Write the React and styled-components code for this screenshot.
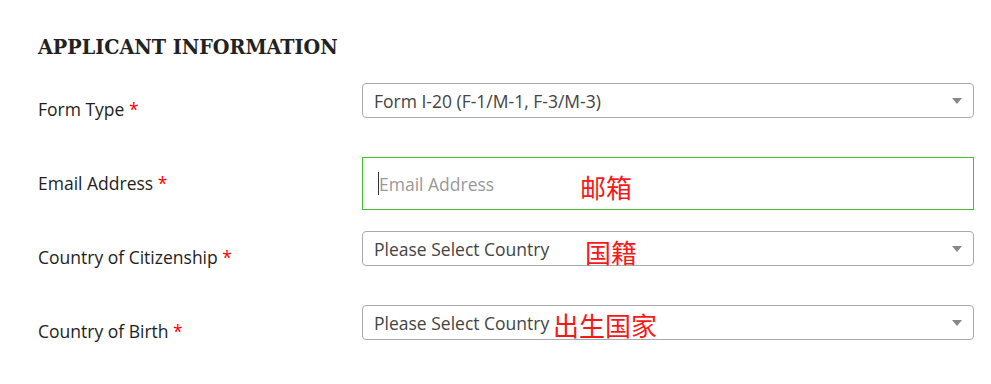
import React from "react";
import styled, { createGlobalStyle } from "styled-components";

const GlobalStyle = createGlobalStyle`
  html, body {
    margin: 0;
    padding: 0;
    background: #fff;
  }
  body {
    font-family: "Open Sans", "Noto Sans", sans-serif;
    color: #222;
  }
`;

const Section = styled.section`
  width: 991px;
  height: 384px;
  box-sizing: border-box;
  padding: 33px 17px 0 38px;
  background: #fff;
`;

const Heading = styled.h2`
  margin: 0 0 22px;
  font-family: "DejaVu Serif Condensed", "DejaVu Serif", serif;
  font-weight: 700;
  font-size: 21.3px;
  line-height: 28px;
  letter-spacing: 0;
  color: #222;
`;

const Fields = styled.div`
  display: flex;
  flex-direction: column;
  gap: 21px;
`;

const Row = styled.div`
  display: grid;
  grid-template-columns: 324px 1fr;
  height: 53px;
`;

const Label = styled.label`
  align-self: center;
  margin-bottom: 2px;
  font-size: 17.5px;
  line-height: 24px;
  color: #1e1e1e;
`;

const Required = styled.span`
  color: #f00;
`;

const Control = styled.div`
  position: relative;
  align-self: start;
`;

const Select = styled.div`
  box-sizing: border-box;
  height: 35px;
  border: 1px solid #aaa;
  border-radius: 4px;
  padding: 0 11px;
  display: flex;
  align-items: center;
  justify-content: space-between;
  font-size: 17.5px;
  color: #444;
`;

const Arrow = styled.span`
  width: 0;
  height: 0;
  border-left: 5px solid transparent;
  border-right: 5px solid transparent;
  border-top: 6px solid #888;
`;

const Input = styled.div`
  box-sizing: border-box;
  height: 53px;
  border: 1px solid #46c02c;
  padding: 0 15px;
  display: flex;
  align-items: center;
  font-size: 17.5px;
  color: #999;
`;

const Caret = styled.span`
  width: 1px;
  height: 23px;
  background: #333;
`;

const Note = styled.span`
  position: absolute;
  left: ${(p) => p.$left}px;
  top: ${(p) => p.$top}px;
  font-family: "Noto Sans CJK SC", sans-serif;
  font-size: 26px;
  line-height: 30px;
  color: #f81818;
  pointer-events: none;
`;

const Field = ({ label, children }) => (
  <Row>
    <Label>
      {label} <Required>*</Required>
    </Label>
    <Control>{children}</Control>
  </Row>
);

export default function App() {
  return (
    <>
      <GlobalStyle />
      <Section>
        <Heading>APPLICANT INFORMATION</Heading>
        <Fields>
          <Field label="Form Type">
            <Select>
              Form I-20 (F-1/M-1, F-3/M-3)
              <Arrow />
            </Select>
          </Field>
          <Field label="Email Address">
            <Input>
              <Caret />
              Email Address
            </Input>
            <Note $left={218} $top={15}>邮箱</Note>
          </Field>
          <Field label="Country of Citizenship">
            <Select>
              Please Select Country
              <Arrow />
            </Select>
            <Note $left={223} $top={6}>国籍</Note>
          </Field>
          <Field label="Country of Birth">
            <Select>
              Please Select Country
              <Arrow />
            </Select>
            <Note $left={191} $top={5}>出生国家</Note>
          </Field>
        </Fields>
      </Section>
    </>
  );
}
